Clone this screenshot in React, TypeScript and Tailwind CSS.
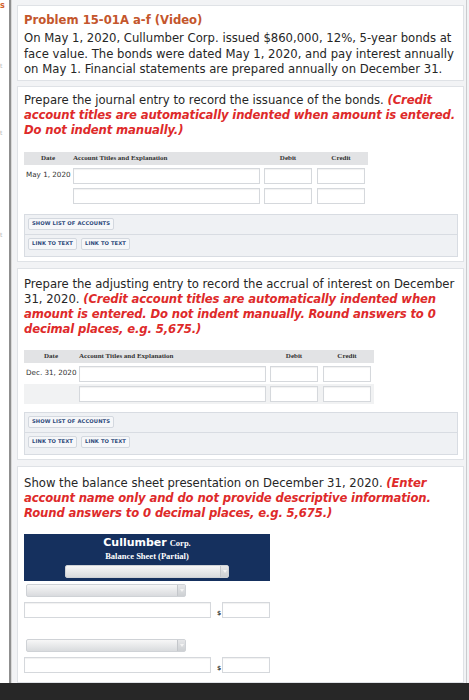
import type { ReactNode } from 'react'

const SANS = "font-['DejaVu_Sans',Verdana,sans-serif]"
const SERIF = "font-['Liberation_Serif','Times_New_Roman',serif]"

function Field({ className = '' }: { className?: string }) {
  return <div className={`h-[16px] shrink-0 border border-[#d5d8dc] bg-white shadow-[inset_0_1px_1px_rgba(0,0,0,0.06)] ${className}`} />
}

function Select({ className = '' }: { className?: string }) {
  return (
    <div
      className={`flex h-[13px] shrink-0 rounded-[2px] border border-[#cfd2d6] bg-gradient-to-b from-[#f7f7f7] to-[#d9dbde] ${className}`}
    >
      <div className="flex-1" />
      <div className="flex w-[8px] items-center justify-center border-l border-[#c4c7cb] bg-gradient-to-b from-[#e6e7e9] to-[#cdd0d3]">
        <svg width="4" height="3" viewBox="0 0 4 3">
          <path d="M0 0h4L2 3z" fill="#f4f4f4" />
        </svg>
      </div>
    </div>
  )
}

function Card({ className = '', children }: { className?: string; children: ReactNode }) {
  return <div className={`border border-[#dfe2e6] bg-white pl-[6px] pr-[4px] ${className}`}>{children}</div>
}

function Red({ children }: { children: ReactNode }) {
  return <span className="font-bold italic tracking-[-0.14px] text-[#de2a2a]">{children}</span>
}

function TinyButton({ label }: { label: string }) {
  return (
    <div
      className={`flex h-[12px] items-center rounded-[2px] border border-[#d3d8df] bg-[#f6f7f9] px-[3px] text-[5.2px] font-bold tracking-[0.1px] text-[#2f4b7c] ${SANS}`}
    >
      {label}
    </div>
  )
}

function ButtonPanel() {
  return (
    <div className="mt-[8px] mr-[1px] flex flex-col border border-[#d8dce2] bg-[#eff1f4]">
      <div className="flex h-[19px] items-center px-[3px]">
        <TinyButton label="SHOW LIST OF ACCOUNTS" />
      </div>
      <div className="flex h-[22px] items-start gap-[4px] border-t border-[#d8dce2] px-[3px] pt-[3px]">
        <TinyButton label="LINK TO TEXT" />
        <TinyButton label="LINK TO TEXT" />
      </div>
    </div>
  )
}

function JournalTable({ date, dateW, altRow }: { date: string; dateW: string; altRow?: boolean }) {
  return (
    <div className="flex w-fit flex-col">
      <div className={`flex h-[13px] items-center bg-[#e2e3e5] pr-[3px] text-[7px] font-bold text-[#333] ${SERIF}`}>
        <div className={`${dateW} text-center`}>Date</div>
        <div className="ml-[1px] w-[187px]">Account Titles and Explanation</div>
        <div className="ml-[4px] w-[48px] text-center">Debit</div>
        <div className="ml-[5px] w-[48px] text-center">Credit</div>
      </div>
      <div className="mt-[3px] flex items-center pr-[3px]">
        <div className={`${dateW} pl-[2px] text-[7.2px] text-[#333] ${SANS}`}>{date}</div>
        <Field className="ml-[1px] w-[187px]" />
        <Field className="ml-[4px] w-[48px]" />
        <Field className="ml-[5px] w-[48px]" />
      </div>
      <div className={`mt-[2px] flex items-center py-[2px] pr-[3px] ${altRow ? 'bg-[#f1f2f3]' : ''}`}>
        <div className={dateW} />
        <Field className="ml-[1px] w-[187px]" />
        <Field className="ml-[4px] w-[48px]" />
        <Field className="ml-[5px] w-[48px]" />
      </div>
    </div>
  )
}

function AmountRow() {
  return (
    <div className="flex items-end">
      <Field className="w-[187px]" />
      <span className={`ml-[6px] mr-[1px] mb-[1px] text-[6px] font-bold text-[#444] ${SANS}`}>$</span>
      <Field className="w-[48px]" />
    </div>
  )
}

export default function App() {
  return (
    <div className={`flex h-[700px] w-[469px] flex-col overflow-hidden bg-white text-[11.65px] text-[#262626] ${SANS}`}>
      <div className="flex min-h-0 flex-1">
        {/* cut-off sidebar */}
        <div className="flex w-[9px] shrink-0 flex-col overflow-hidden text-[8px] leading-[10px]">
          <span className="mt-[1px] font-bold text-[#d2602e]">s</span>
          <span className="mt-[50px] text-[6px] text-[#b4b4b4]">t</span>
          <span className="mt-[57px] text-[6px] text-[#b4b4b4]">t</span>
          <span className="mt-[92px] text-[6px] text-[#b4b4b4]">t</span>
        </div>
        <div className="w-[2px] shrink-0 bg-[#8f8f8f]" />
        <div className="w-[1px] shrink-0 bg-[#d9d9d9]" />

        <div className="flex min-w-0 flex-1 flex-col gap-[5px] bg-[#f2f3f5] pt-[5px] pl-[5px] pr-[2px]">
          <Card className="pt-[6px] pb-[2px]">
            <div className="whitespace-nowrap font-bold leading-[16px] text-[#c4562c]">Problem 15-01A a-f (Video)</div>
            <p className="mt-[3px] whitespace-nowrap leading-[15.5px]">
              On May 1, 2020, Cullumber Corp. issued $860,000, 12%, 5-year bonds at
              <br />
              face value. The bonds were dated May 1, 2020, and pay interest annually
              <br />
              on May 1. Financial statements are prepared annually on December 31.
            </p>
          </Card>

          <Card className="pt-[6px] pb-[4px]">
            <p className="whitespace-nowrap leading-[15px]">
              Prepare the journal entry to record the issuance of the bonds. <Red>(Credit</Red>
              <br />
              <Red>account titles are automatically indented when amount is entered.</Red>
              <br />
              <Red>Do not indent manually.)</Red>
            </p>
            <div className="mt-[14px]">
              <JournalTable date="May 1, 2020" dateW="w-[48px]" />
            </div>
            <ButtonPanel />
          </Card>

          <Card className="mt-[1px] pt-[8px] pb-[4px]">
            <p className="whitespace-nowrap leading-[15px]">
              Prepare the adjusting entry to record the accrual of interest on December
              <br />
              31, 2020. <Red>(Credit account titles are automatically indented when</Red>
              <br />
              <Red>amount is entered. Do not indent manually. Round answers to 0</Red>
              <br />
              <Red>decimal places, e.g. 5,675.)</Red>
            </p>
            <div className="mt-[13px]">
              <JournalTable date="Dec. 31, 2020" dateW="w-[54px]" altRow />
            </div>
            <ButtonPanel />
          </Card>

          <Card className="mt-[1px] flex-1 pt-[9px]">
            <p className="whitespace-nowrap leading-[15px]">
              Show the balance sheet presentation on December 31, 2020. <Red>(Enter</Red>
              <br />
              <Red>account name only and do not provide descriptive information.</Red>
              <br />
              <Red>Round answers to 0 decimal places, e.g. 5,675.)</Red>
            </p>
            <div className="mt-[13px] flex w-[246px] flex-col items-center bg-[#15305e] pt-[2px] pb-[3px] text-white">
              <div className="flex items-baseline gap-[3px] leading-[13px]">
                <span className="text-[11px] font-bold">Cullumber</span>
                <span className={`text-[8.5px] font-bold ${SERIF}`}>Corp.</span>
              </div>
              <div className={`text-[8.5px] font-bold leading-[12px] ${SERIF}`}>Balance Sheet (Partial)</div>
              <Select className="mt-[3px] w-[164px]" />
            </div>
            <Select className="mt-[3px] ml-[2px] w-[160px]" />
            <div className="mt-[5px]">
              <AmountRow />
            </div>
            <Select className="mt-[21px] ml-[2px] w-[160px]" />
            <div className="mt-[5px]">
              <AmountRow />
            </div>
          </Card>
        </div>

        <div className="w-[1px] shrink-0 bg-[#c9cbce]" />
        <div className="w-[2px] shrink-0 bg-[#f2f3f5]" />
      </div>
      <div className="h-[17px] shrink-0 bg-[#272727]" />
    </div>
  )
}
